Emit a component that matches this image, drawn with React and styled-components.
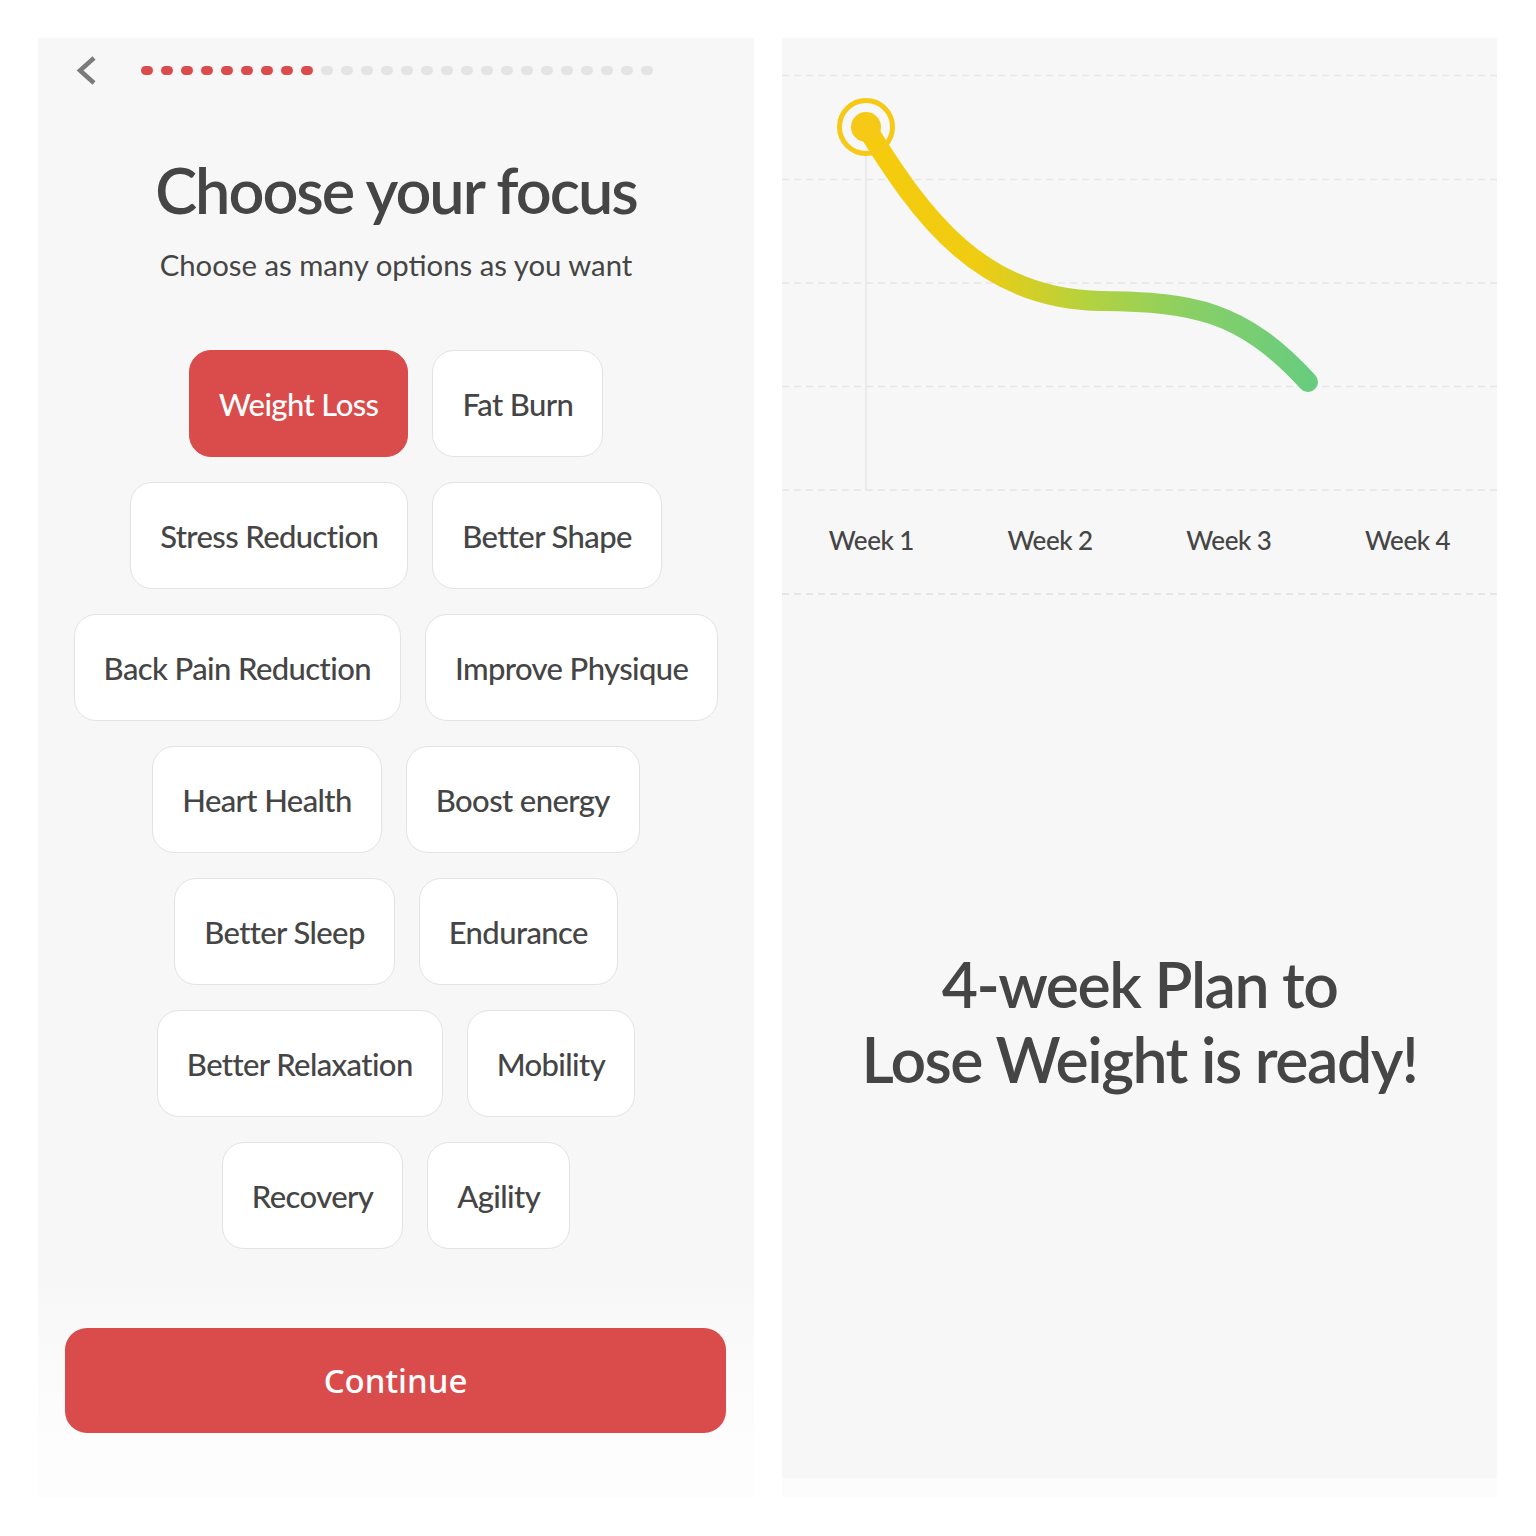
import React from "react"
import styled, { createGlobalStyle } from "styled-components"

const colors = {
  red: "#da4b4b",
  text: "#454545",
  panel: "#f7f7f7",
  border: "#e3e3e3",
  dotOff: "#e4e4e4",
  grid: "#e6e6e6",
}

const GlobalStyle = createGlobalStyle`
  body {
    margin: 0;
    background: #ffffff;
    font-family: Lato, "Open Sans", sans-serif;
    color: ${colors.text};
  }
`

const Page = styled.div`
  display: flex;
  align-items: flex-start;
  gap: 28px;
  padding: 38px 39px 39px 38px;
  width: 1536px;
  box-sizing: border-box;
`

const LeftPanel = styled.section`
  width: 716px;
  height: 1459px;
  background: ${colors.panel};
  display: flex;
  flex-direction: column;
  align-items: center;
`

const Header = styled.div`
  width: 100%;
  box-sizing: border-box;
  display: flex;
  align-items: center;
  gap: 45px;
  padding: 1px 0 0 38px;
  height: 64px;
`

const Back = styled.button`
  border: 0;
  padding: 0;
  background: none;
  width: 20px;
  height: 29px;
  display: flex;
  color: #7b7b7b;
`

const Dots = styled.div`
  display: flex;
  gap: 8px;
`

const Dot = styled.span`
  width: 12px;
  height: 9px;
  border-radius: 5px;
  background: ${(p) => (p.$on ? colors.red : colors.dotOff)};
`

const Title = styled.h1`
  margin: 48px 0 0;
  font-size: 63px;
  font-weight: 600;
  letter-spacing: -2px;
  line-height: 80px;
`

const Subtitle = styled.p`
  margin: 15px 0 0;
  font-size: 29.3px;
  font-weight: 400;
  line-height: 40px;
`

const Options = styled.div`
  margin-top: 65px;
  display: flex;
  flex-direction: column;
  gap: 25px;
`

const OptionRow = styled.div`
  display: flex;
  justify-content: center;
  gap: 24px;
`

const Chip = styled.button`
  height: 107px;
  padding: 0 29px;
  box-sizing: border-box;
  border-radius: 22px;
  border: 1.5px solid ${(p) => (p.$selected ? colors.red : colors.border)};
  background: ${(p) => (p.$selected ? colors.red : "#ffffff")};
  color: ${(p) => (p.$selected ? "#ffffff" : colors.text)};
  font-family: Lato, sans-serif;
  font-size: 31px;
  font-weight: 500;
  letter-spacing: -0.6px;
  cursor: pointer;
`

const Footer = styled.div`
  margin-top: auto;
  width: 100%;
  box-sizing: border-box;
  padding: 58px 28px 64px 27px;
  background: linear-gradient(to bottom, ${colors.panel} 0%, #fdfdfd 75%, #fdfdfd 100%);
`

const ContinueButton = styled.button`
  width: 100%;
  height: 105px;
  border: 0;
  border-radius: 22px;
  background: ${colors.red};
  color: #ffffff;
  font-family: "Noto Sans", "Open Sans", sans-serif;
  font-size: 33px;
  font-weight: 500;
  cursor: pointer;
`

const RightPanel = styled.section`
  width: 715px;
  height: 1440px;
  background: ${colors.panel};
  display: flex;
  flex-direction: column;
  box-shadow: 0 19px 0 #fcfcfc;
`

const Chart = styled.svg`
  display: block;
  width: 715px;
  height: 456px;
`

const WeekRow = styled.div`
  display: grid;
  grid-template-columns: repeat(4, 1fr);
  height: 99px;
  box-sizing: border-box;
  padding-bottom: 8px;
  align-items: center;
`

const WeekLabel = styled.span`
  text-align: center;
  font-size: 26px;
  font-weight: 500;
  letter-spacing: -0.5px;
`

const Divider = styled.div`
  height: 1.5px;
  background: repeating-linear-gradient(to right, ${colors.grid} 0 7px, transparent 7px 12px);
`

const Message = styled.div`
  flex: 1;
  display: flex;
  align-items: center;
  justify-content: center;
  padding-bottom: 30px;
`

const Ready = styled.h2`
  margin: 0;
  text-align: center;
  font-size: 62.5px;
  font-weight: 600;
  letter-spacing: -1.5px;
  line-height: 75px;
`

const rows = [
  ["Weight Loss", "Fat Burn"],
  ["Stress Reduction", "Better Shape"],
  ["Back Pain Reduction", "Improve Physique"],
  ["Heart Health", "Boost energy"],
  ["Better Sleep", "Endurance"],
  ["Better Relaxation", "Mobility"],
  ["Recovery", "Agility"],
]

const gridLines = [37.5, 141.5, 245, 348.5, 452]

const ProgressChart = () => (
  <Chart viewBox="0 0 715 456">
    <defs>
      <linearGradient id="trend" gradientUnits="userSpaceOnUse" x1="84" y1="0" x2="530" y2="0">
        <stop offset="0" stopColor="#f6cb0c" />
        <stop offset="0.25" stopColor="#efcc12" />
        <stop offset="0.5" stopColor="#b3d23f" />
        <stop offset="0.75" stopColor="#86cf68" />
        <stop offset="1" stopColor="#67cc7f" />
      </linearGradient>
    </defs>
    {gridLines.map((y) => (
      <line key={y} x1="0" x2="715" y1={y} y2={y} stroke={colors.grid} strokeWidth="1.5" strokeDasharray="7 5" />
    ))}
    <line x1="84" x2="84" y1="118" y2="452" stroke="#e6e6e6" strokeWidth="1.5" />
    <path
      d="M84 89 C 140 180 200 262 320 263 C 410 264 460 272 526 344"
      fill="none"
      stroke="url(#trend)"
      strokeWidth="20"
      strokeLinecap="round"
    />
    <circle cx="84" cy="89" r="26.5" fill="none" stroke="#f5c916" strokeWidth="5" />
    <circle cx="84" cy="89" r="15" fill="#f5c916" />
  </Chart>
)

const App = () => (
  <>
    <GlobalStyle />
    <Page>
      <LeftPanel>
        <Header>
          <Back aria-label="Back">
            <svg width="20" height="29" viewBox="0 0 20 29">
              <polyline points="18,2 4,14.5 18,27" fill="none" stroke="currentColor" strokeWidth="4.5" />
            </svg>
          </Back>
          <Dots>
            {Array.from({ length: 26 }, (_, i) => (
              <Dot key={i} $on={i < 9} />
            ))}
          </Dots>
        </Header>
        <Title>Choose your focus</Title>
        <Subtitle>Choose as many options as you want</Subtitle>
        <Options>
          {rows.map((row) => (
            <OptionRow key={row[0]}>
              {row.map((label) => (
                <Chip key={label} $selected={label === "Weight Loss"}>
                  {label}
                </Chip>
              ))}
            </OptionRow>
          ))}
        </Options>
        <Footer>
          <ContinueButton>Continue</ContinueButton>
        </Footer>
      </LeftPanel>
      <RightPanel>
        <ProgressChart />
        <WeekRow>
          {["Week 1", "Week 2", "Week 3", "Week 4"].map((w) => (
            <WeekLabel key={w}>{w}</WeekLabel>
          ))}
        </WeekRow>
        <Divider />
        <Message>
          <Ready>
            4-week Plan to
            <br />
            Lose Weight is ready!
          </Ready>
        </Message>
      </RightPanel>
    </Page>
  </>
)

export default App
